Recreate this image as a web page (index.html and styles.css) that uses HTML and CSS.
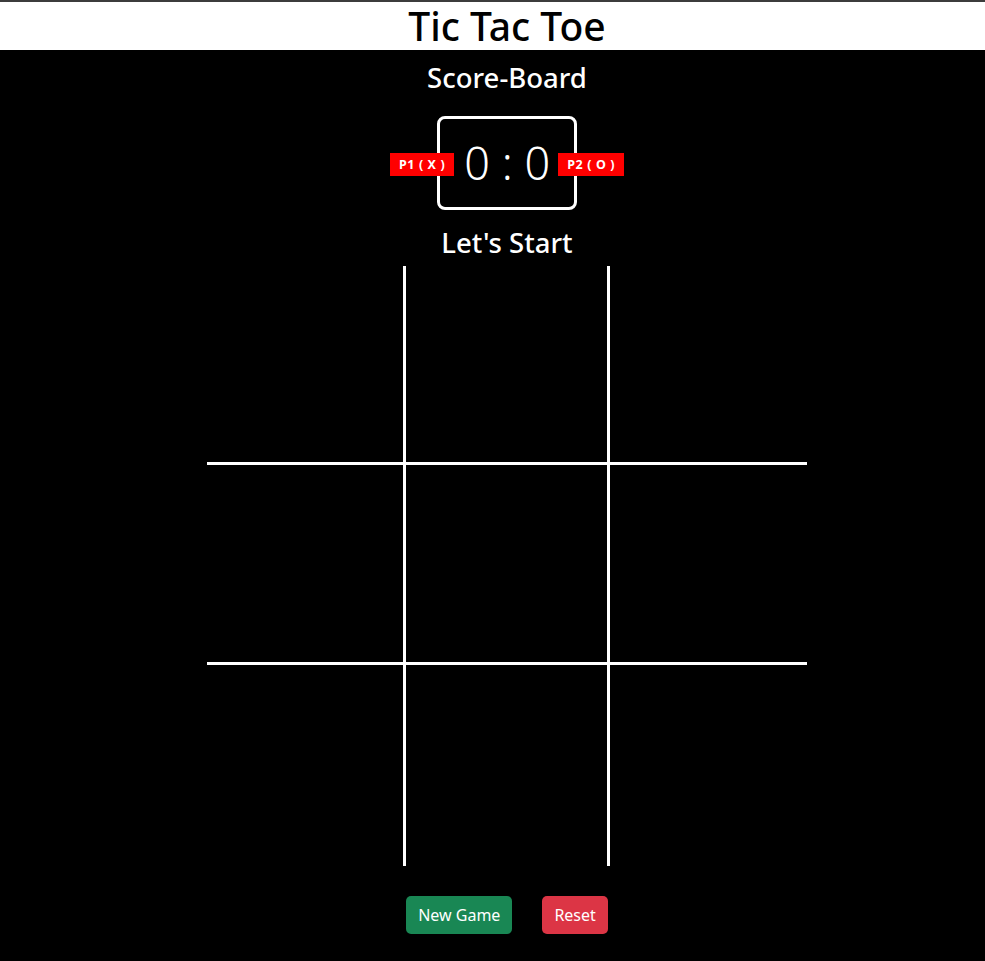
FILE: index.html
```html
<!DOCTYPE html>
<html lang="en">
<head>
<meta charset="utf-8">
<title>Tic Tac Toe</title>
<link rel="stylesheet" href="styles.css">
</head>
<body>
<div class="page">
  <header class="top">
    <h1 class="title">Tic Tac Toe</h1>
  </header>
  <main class="game">
    <h3 class="heading score-title">Score-Board</h3>
    <div class="score-row">
      <span class="badge badge-p1">P1 ( X )</span>
      <div class="score-box">0 : 0</div>
      <span class="badge badge-p2">P2 ( O )</span>
    </div>
    <h3 class="heading status">Let's Start</h3>
    <div class="board">
      <div class="cell"></div><div class="cell"></div><div class="cell"></div>
      <div class="cell"></div><div class="cell"></div><div class="cell"></div>
      <div class="cell"></div><div class="cell"></div><div class="cell"></div>
    </div>
    <div class="actions">
      <button class="btn btn-new">New Game</button>
      <button class="btn btn-reset">Reset</button>
    </div>
  </main>
</div>
</body>
</html>
```
FILE: styles.css
```css
html, body {
  margin: 0;
  padding: 0;
  background: #000;
}
body {
  font-family: "Noto Sans", "Open Sans", sans-serif;
}
.page {
  min-width: 1014px;
}
.top {
  background: #fff;
  border-top: 2px solid #3c3c3c;
  height: 48px;
  text-align: center;
}
.title {
  margin: 0;
  font-size: 39px;
  font-weight: 500;
  line-height: 47px;
  color: #000;
}
.game {
  background: #000;
  color: #fff;
  display: flex;
  flex-direction: column;
  align-items: center;
  padding-bottom: 40px;
}
.heading {
  margin: 0;
  font-size: 27.5px;
  font-weight: 500;
  line-height: 32px;
}
.score-title {
  margin-top: 12px;
  margin-bottom: 22px;
}
.score-row {
  display: flex;
  align-items: center;
}
.score-box {
  box-sizing: border-box;
  width: 140px;
  height: 94px;
  border: 3px solid #fff;
  border-radius: 8px;
  font-size: 45px;
  font-weight: 300;
  line-height: 88px;
  text-align: center;
}
.badge {
  position: relative;
  z-index: 1;
  background: #ff0000;
  color: #fff;
  font-size: 12.5px;
  font-weight: 700;
  letter-spacing: 0.6px;
  line-height: 15px;
  padding: 4px 9px;
  white-space: pre;
  margin-top: 3px;
}
.badge-p1 {
  margin-right: -17px;
}
.badge-p2 {
  margin-left: -19px;
}
.status {
  margin-top: 17px;
  margin-bottom: 7px;
}
.board {
  display: grid;
  grid-template-columns: 196px 201px 197px;
  grid-template-rows: 196px 197px 201px;
  gap: 3px;
  background: #fff;
}
.cell {
  background: #000;
}
.actions {
  display: flex;
  gap: 30px;
  margin-top: 30px;
}
.btn {
  font-family: inherit;
  font-size: 16px;
  line-height: 24px;
  padding: 7px 12px;
  border: 0;
  border-radius: 5px;
  color: #fff;
  cursor: pointer;
}
.btn-new {
  background: #198754;
}
.btn-reset {
  background: #dc3545;
}
```
